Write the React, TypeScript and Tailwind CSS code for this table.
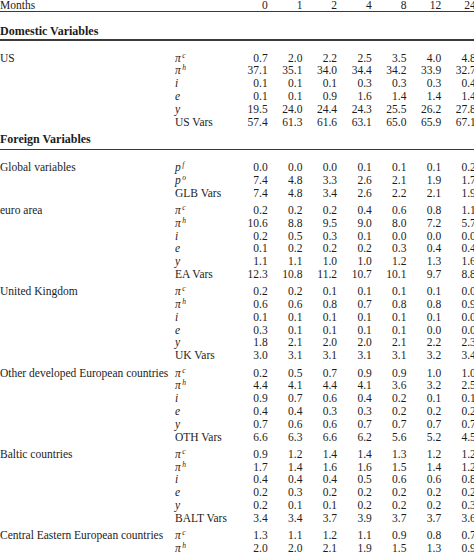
import React from "react";

type Sym = { base: string; sup?: string; math?: boolean };
type Row = { sym: Sym; values: string[] };
type Group = { label: string; rows: Row[] };

const months = ["0", "1", "2", "4", "8", "12", "24"];

const gridClass =
  "grid grid-cols-[175px_58px_repeat(7,34.7px)] h-[12.8px] leading-[12.8px] whitespace-nowrap";

const m = (base: string, sup?: string): Sym => ({ base, sup, math: true });
const t = (base: string): Sym => ({ base });

const r = (sym: Sym, line: string): Row => ({ sym, values: line.split(" ") });

const domestic: Group[] = [
  {
    label: "US",
    rows: [
      r(m("π", "c"), "0.7 2.0 2.2 2.5 3.5 4.0 4.8"),
      r(m("π", "h"), "37.1 35.1 34.0 34.4 34.2 33.9 32.7"),
      r(m("i"), "0.1 0.1 0.1 0.3 0.3 0.3 0.4"),
      r(m("e"), "0.1 0.1 0.9 1.6 1.4 1.4 1.4"),
      r(m("y"), "19.5 24.0 24.4 24.3 25.5 26.2 27.8"),
      r(t("US Vars"), "57.4 61.3 61.6 63.1 65.0 65.9 67.1"),
    ],
  },
];

const foreign: Group[] = [
  {
    label: "Global variables",
    rows: [
      r(m("p", "f"), "0.0 0.0 0.0 0.1 0.1 0.1 0.2"),
      r(m("p", "o"), "7.4 4.8 3.3 2.6 2.1 1.9 1.7"),
      r(t("GLB Vars"), "7.4 4.8 3.4 2.6 2.2 2.1 1.9"),
    ],
  },
  {
    label: "euro area",
    rows: [
      r(m("π", "c"), "0.2 0.2 0.2 0.4 0.6 0.8 1.1"),
      r(m("π", "h"), "10.6 8.8 9.5 9.0 8.0 7.2 5.7"),
      r(m("i"), "0.2 0.5 0.3 0.1 0.0 0.0 0.0"),
      r(m("e"), "0.1 0.2 0.2 0.2 0.3 0.4 0.4"),
      r(m("y"), "1.1 1.1 1.0 1.0 1.2 1.3 1.6"),
      r(t("EA Vars"), "12.3 10.8 11.2 10.7 10.1 9.7 8.8"),
    ],
  },
  {
    label: "United Kingdom",
    rows: [
      r(m("π", "c"), "0.2 0.2 0.1 0.1 0.1 0.1 0.0"),
      r(m("π", "h"), "0.6 0.6 0.8 0.7 0.8 0.8 0.9"),
      r(m("i"), "0.1 0.1 0.1 0.1 0.1 0.1 0.0"),
      r(m("e"), "0.3 0.1 0.1 0.1 0.1 0.0 0.0"),
      r(m("y"), "1.8 2.1 2.0 2.0 2.1 2.2 2.3"),
      r(t("UK Vars"), "3.0 3.1 3.1 3.1 3.1 3.2 3.4"),
    ],
  },
  {
    label: "Other developed European countries",
    rows: [
      r(m("π", "c"), "0.2 0.5 0.7 0.9 0.9 1.0 1.0"),
      r(m("π", "h"), "4.4 4.1 4.4 4.1 3.6 3.2 2.5"),
      r(m("i"), "0.9 0.7 0.6 0.4 0.2 0.1 0.1"),
      r(m("e"), "0.4 0.4 0.3 0.3 0.2 0.2 0.2"),
      r(m("y"), "0.7 0.6 0.6 0.7 0.7 0.7 0.7"),
      r(t("OTH Vars"), "6.6 6.3 6.6 6.2 5.6 5.2 4.5"),
    ],
  },
  {
    label: "Baltic countries",
    rows: [
      r(m("π", "c"), "0.9 1.2 1.4 1.4 1.3 1.2 1.2"),
      r(m("π", "h"), "1.7 1.4 1.6 1.6 1.5 1.4 1.2"),
      r(m("i"), "0.4 0.4 0.4 0.5 0.6 0.6 0.8"),
      r(m("e"), "0.2 0.3 0.2 0.2 0.2 0.2 0.2"),
      r(m("y"), "0.2 0.1 0.1 0.2 0.2 0.2 0.3"),
      r(t("BALT Vars"), "3.4 3.4 3.7 3.9 3.7 3.7 3.6"),
    ],
  },
  {
    label: "Central Eastern European countries",
    rows: [
      r(m("π", "c"), "1.3 1.1 1.2 1.1 0.9 0.8 0.7"),
      r(m("π", "h"), "2.0 2.0 2.1 1.9 1.5 1.3 0.9"),
    ],
  },
];

const Symbol = ({ sym }: { sym: Sym }) => {
  if (!sym.math) return <span>{sym.base}</span>;
  return (
    <span className="italic">
      {sym.base}
      {sym.sup && (
        <span className="relative -top-[4px] ml-[1.5px] text-[7.5px]">{sym.sup}</span>
      )}
    </span>
  );
};

const Rule = () => <div className="h-[1.4px] bg-[#3a3a3a]" />;

const GroupBlock = ({ group, first }: { group: Group; first?: boolean }) => (
  <div className={first ? "" : "mt-[4.5px]"}>
    {group.rows.map((row, i) => (
      <div key={i} className={gridClass}>
        <span>{i === 0 ? group.label : ""}</span>
        <Symbol sym={row.sym} />
        {row.values.map((v, j) => (
          <span key={j} className="text-right">
            {v}
          </span>
        ))}
      </div>
    ))}
  </div>
);

export default function App() {
  return (
    <div className="w-[474px] h-[555px] overflow-hidden bg-white text-[#1c1c1c] text-[11.5px] font-['Liberation_Serif',serif]">
      <div className="w-[476px]">
        <div className="grid grid-cols-[175px_58px_repeat(7,34.7px)] h-[11px] leading-[11px]">
          <span>Months</span>
          <span />
          {months.map((mo) => (
            <span key={mo} className="text-right">
              {mo}
            </span>
          ))}
        </div>
        <Rule />
        <div className="mt-[12.2px] h-[12.8px] leading-[12.8px] font-bold text-[12px]">
          Domestic Variables
        </div>
        <div className="mt-[2px]">
          <Rule />
        </div>
        <div className="mt-[10.8px]">
          {domestic.map((g, i) => (
            <GroupBlock key={g.label} group={g} first={i === 0} />
          ))}
        </div>
        <div className="mt-[4.2px] h-[12.8px] leading-[12.8px] font-bold text-[12px]">
          Foreign Variables
        </div>
        <div className="mt-[3.2px]">
          <Rule />
        </div>
        <div className="mt-[11.2px]">
          {foreign.map((g, i) => (
            <GroupBlock key={g.label} group={g} first={i === 0} />
          ))}
        </div>
      </div>
    </div>
  );
}
